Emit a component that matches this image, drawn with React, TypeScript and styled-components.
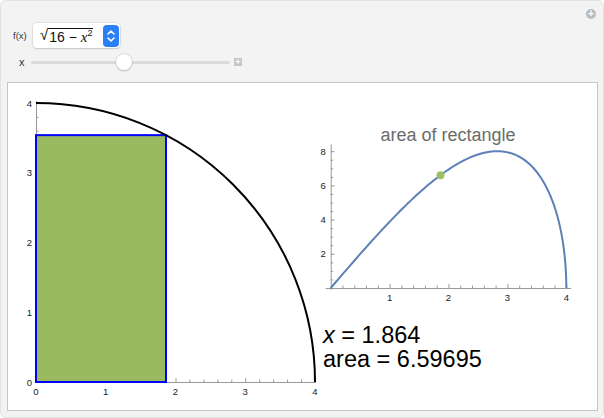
import React from 'react';
import styled, { createGlobalStyle } from 'styled-components';

const GlobalStyle = createGlobalStyle`
  html, body {
    margin: 0;
    padding: 0;
    background: #ffffff;
  }
  body {
    font-family: "Liberation Sans", Arial, sans-serif;
  }
`;

const X_VALUE = 1.864;
const fx = (x: number) => Math.sqrt(Math.max(0, 16 - x * x));
const area = (x: number) => x * fx(x);

export const Frame = styled.div`
  position: relative;
  box-sizing: border-box;
  width: 604px;
  height: 418px;
  background: #f3f3f3;
  border: 1px solid #e2e2e2;
  border-radius: 6px;
  display: flex;
  flex-direction: column;
  padding: 22px 7px 0 5px;
`;

export const CornerButton = styled.div`
  position: absolute;
  top: 8px;
  right: 7px;
  width: 10px;
  height: 10px;
  border-radius: 50%;
  background: #bcbcbc;
  display: flex;
  align-items: center;
  justify-content: center;
  color: #fff;
  font-size: 10px;
  font-weight: bold;
  line-height: 10px;
`;

export const Controls = styled.div`
  display: flex;
  flex-direction: column;
  gap: 8px;
  height: 59px;
  padding-left: 7px;
`;

export const ControlRow = styled.div`
  display: flex;
  align-items: center;
`;

export const Label = styled.span<{ $width: number; $size: number }>`
  width: ${(p) => p.$width}px;
  font-size: ${(p) => p.$size}px;
  color: #333;
  font-family: "Liberation Sans", Arial, sans-serif;
`;

export const Popup = styled.div`
  box-sizing: border-box;
  width: 87px;
  height: 25px;
  background: #fff;
  border-radius: 4px;
  box-shadow: 0 0 0 0.5px #cfcfcf, 0 1px 1.5px rgba(0, 0, 0, 0.18);
  display: flex;
  align-items: center;
  justify-content: space-between;
  padding: 0 1px 0 7px;
`;

export const MathText = styled.span`
  display: flex;
  align-items: flex-start;
  font-family: "Liberation Sans", Arial, sans-serif;
  font-size: 14px;
  color: #111;
`;

export const Radical = styled.span`
  font-size: 15px;
  line-height: 18px;
`;

export const Radicand = styled.span`
  border-top: 1px solid #111;
  line-height: 16px;
  padding: 0 1px 0 1px;
  margin-top: 2px;

  i {
    font-family: "Liberation Serif", "Times New Roman", serif;
    font-size: 15px;
  }
  sup {
    font-size: 9px;
    line-height: 0;
  }
`;

export const Stepper = styled.div`
  width: 16px;
  height: 22px;
  border-radius: 4px;
  background: #2a80f7;
  display: flex;
  align-items: center;
  justify-content: center;
`;

export const SliderTrack = styled.div`
  position: relative;
  width: 199px;
  height: 3px;
  border-radius: 2px;
  background: #dcdcdc;
  margin-left: 1px;
`;

export const SliderThumb = styled.div`
  position: absolute;
  top: -7px;
  width: 16px;
  height: 16px;
  margin-left: -8px;
  border-radius: 50%;
  background: #fff;
  box-shadow: 0 0 0 0.5px #c4c4c4, 0 1px 2px rgba(0, 0, 0, 0.25);
`;

export const PlusButton = styled.div`
  width: 8px;
  height: 8px;
  margin-left: 4px;
  background: #c6c6c6;
  color: #fff;
  font-size: 9px;
  line-height: 8px;
  text-align: center;
  font-weight: bold;
`;

export const Panel = styled.div`
  box-sizing: border-box;
  width: 591px;
  height: 329px;
  margin-left: 1px;
  background: #fff;
  border: 1px solid #c6c6c6;
  display: flex;
`;

export const RightColumn = styled.div`
  display: flex;
  flex-direction: column;
  padding-top: 34px;
`;

export const Readout = styled.div`
  margin-top: 6px;
  padding-left: 5px;
  font-family: "Liberation Sans", Arial, sans-serif;
  font-size: 23.5px;
  line-height: 24px;
  color: #000;

  i {
    font-style: italic;
  }
`;

const tickFont = { fontFamily: '"Liberation Sans", Arial, sans-serif', fontSize: 9.5, fill: '#222' };

const range = (from: number, to: number, step: number) => {
  const out: number[] = [];
  for (let v = from; v <= to + 1e-9; v += step) out.push(Math.round(v * 1000) / 1000);
  return out;
};

const MainPlot = () => {
  const ox = 28;
  const oy = 299;
  const s = 69.75;
  const r = 4 * s;
  const w = X_VALUE * s;
  const h = fx(X_VALUE) * s;
  return (
    <svg width={310} height={327}>
      <g stroke="#999" strokeWidth={1}>
        <line x1={ox} y1={oy + 0.5} x2={ox + r + 1} y2={oy + 0.5} />
        <line x1={ox + 0.5} y1={oy} x2={ox + 0.5} y2={oy - r - 2} />
        {range(0, 4, 0.2).map((v) => {
          const major = Math.abs(v - Math.round(v)) < 1e-6;
          const len = major ? 4 : 2.5;
          return (
            <g key={v}>
              <line x1={ox + v * s + 0.5} y1={oy} x2={ox + v * s + 0.5} y2={oy - len} />
              <line x1={ox} y1={oy - v * s + 0.5} x2={ox + len} y2={oy - v * s + 0.5} />
            </g>
          );
        })}
      </g>
      {[0, 1, 2, 3, 4].map((v) => (
        <g key={v} style={tickFont}>
          <text x={ox + v * s} y={oy + 13} textAnchor="middle">{v}</text>
          <text x={ox - 4} y={oy - v * s + 3.5} textAnchor="end">{v}</text>
        </g>
      ))}
      <rect x={ox} y={oy - h} width={w} height={h} fill="#99ba5e" stroke="#0000ff" strokeWidth={2} />
      <path
        d={`M ${ox} ${oy - r} A ${r} ${r} 0 0 1 ${ox + r} ${oy}`}
        fill="none"
        stroke="#000"
        strokeWidth={2}
      />
    </svg>
  );
};

const AreaPlot = () => {
  const ox = 12.7;
  const oy = 171;
  const sx = 58.9;
  const sy = 17.1;
  const xs: number[] = [];
  for (let i = 0; i <= 200; i++) {
    const t = i / 200;
    xs.push(4 * (1 - Math.pow(1 - t, 2.2)));
  }
  const d = xs
    .map((x, i) => `${i === 0 ? 'M' : 'L'} ${(ox + x * sx).toFixed(2)} ${(oy - area(x) * sy).toFixed(2)}`)
    .join(' ');
  return (
    <svg width={278} height={200}>
      <text
        x={130}
        y={24}
        textAnchor="middle"
        style={{ fontFamily: '"Liberation Sans", Arial, sans-serif', fontSize: 18, fill: '#6b6b6b' }}
      >
        area of rectangle
      </text>
      <g stroke="#999" strokeWidth={1}>
        <line x1={ox - 5} y1={oy + 0.5} x2={ox + 4 * sx + 5} y2={oy + 0.5} />
        <line x1={ox + 0.5} y1={oy + 2} x2={ox + 0.5} y2={oy - 8.4 * sy} />
        {range(0.2, 4, 0.2).map((v) => {
          const major = Math.abs(v - Math.round(v)) < 1e-6;
          return (
            <line key={v} x1={ox + v * sx + 0.5} y1={oy} x2={ox + v * sx + 0.5} y2={oy - (major ? 4 : 2.5)} />
          );
        })}
        {range(0.5, 8, 0.5).map((v) => {
          const major = Math.abs(v / 2 - Math.round(v / 2)) < 1e-6;
          return (
            <line key={v} x1={ox} y1={oy - v * sy + 0.5} x2={ox + (major ? 4 : 2.5)} y2={oy - v * sy + 0.5} />
          );
        })}
      </g>
      {[1, 2, 3, 4].map((v) => (
        <text key={`x${v}`} x={ox + v * sx} y={oy + 13} textAnchor="middle" style={tickFont}>{v}</text>
      ))}
      {[2, 4, 6, 8].map((v) => (
        <text key={`y${v}`} x={ox - 5} y={oy - v * sy + 3.5} textAnchor="end" style={tickFont}>{v}</text>
      ))}
      <path d={d} fill="none" stroke="#5d80b6" strokeWidth={2} />
      <circle cx={ox + X_VALUE * sx} cy={oy - area(X_VALUE) * sy} r={4} fill="#9cc163" />
    </svg>
  );
};

const StepperIcon = () => (
  <svg width={10} height={16} viewBox="0 0 10 16">
    <path d="M2 6 L5 3 L8 6 M2 10 L5 13 L8 10" fill="none" stroke="#fff" strokeWidth={1.6} strokeLinecap="round" strokeLinejoin="round" />
  </svg>
);

export default function App() {
  const thumbPos = 93;
  return (
    <>
      <GlobalStyle />
      <Frame>
        <CornerButton>+</CornerButton>
        <Controls>
          <ControlRow>
            <Label $width={20} $size={9.5}>f(x)</Label>
            <Popup>
              <MathText>
                <Radical>√</Radical>
                <Radicand>
                  16 − <i>x</i>
                  <sup>2</sup>
                </Radicand>
              </MathText>
              <Stepper>
                <StepperIcon />
              </Stepper>
            </Popup>
          </ControlRow>
          <ControlRow>
            <Label $width={17} $size={11}>&nbsp;&nbsp;x</Label>
            <SliderTrack>
              <SliderThumb style={{ left: thumbPos }} />
            </SliderTrack>
            <PlusButton>+</PlusButton>
          </ControlRow>
        </Controls>
        <Panel>
          <MainPlot />
          <RightColumn>
            <AreaPlot />
            <Readout>
              <div>
                <i>x</i> = {X_VALUE.toFixed(3)}
              </div>
              <div>area = {area(X_VALUE).toFixed(5)}</div>
            </Readout>
          </RightColumn>
        </Panel>
      </Frame>
    </>
  );
}
